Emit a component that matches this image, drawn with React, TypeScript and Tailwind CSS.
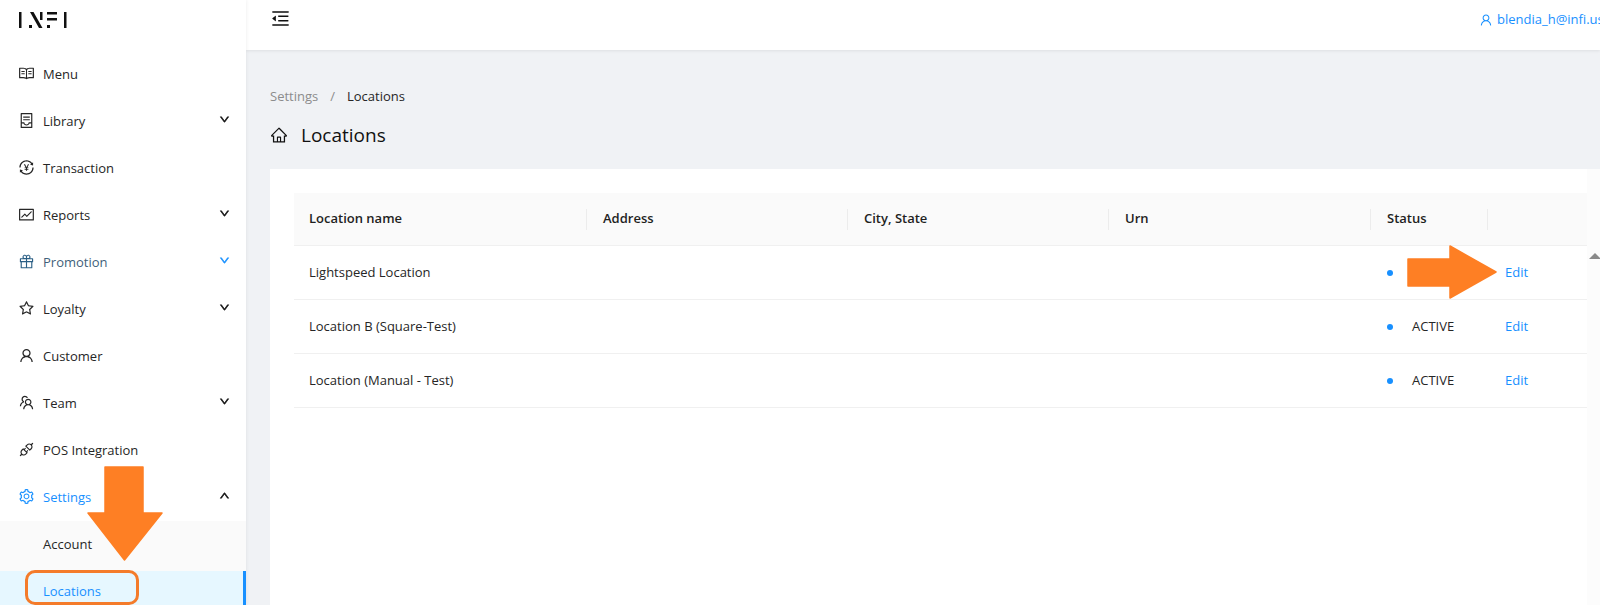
import React from "react";
import {
  AiOutlineRead,
  AiOutlineContainer,
  AiOutlineTransaction,
  AiOutlineFund,
  AiOutlineGift,
  AiOutlineStar,
  AiOutlineUser,
  AiOutlineTeam,
  AiOutlineApi,
  AiOutlineSetting,
  AiOutlineHome,
  AiOutlineMenuFold,
  AiOutlineDown,
  AiOutlineUp,
} from "react-icons/ai";

const items = [
  { label: "Menu", Icon: AiOutlineRead },
  { label: "Library", Icon: AiOutlineContainer, chev: true },
  { label: "Transaction", Icon: AiOutlineTransaction },
  { label: "Reports", Icon: AiOutlineFund, chev: true },
  { label: "Promotion", Icon: AiOutlineGift, chev: true, hover: true },
  { label: "Loyalty", Icon: AiOutlineStar, chev: true },
  { label: "Customer", Icon: AiOutlineUser },
  { label: "Team", Icon: AiOutlineTeam, chev: true },
  { label: "POS Integration", Icon: AiOutlineApi },
];

const rows = ["Lightspeed Location", "Location B (Square-Test)", "Location (Manual - Test)"];

function Logo() {
  return (
    <svg width="48" height="16" viewBox="0 0 48 16" className="block">
      <rect x="0" y="0" width="2.500" height="16" fill="#111" />
      <rect x="10" y="13" width="3" height="3" fill="#111" />
      <path d="M11 0h3.500l9 16h-3.500z" fill="#111" />
      <rect x="21" y="0" width="2.500" height="8" fill="#111" />
      <rect x="28" y="0" width="10" height="2.500" fill="#111" />
      <rect x="28" y="6" width="10" height="2.500" fill="#111" />
      <rect x="28" y="13" width="3" height="3" fill="#111" />
      <rect x="45" y="0" width="2.500" height="16" fill="#111" />
    </svg>
  );
}

export default function App() {
  return (
    <div className="relative flex h-[605px] w-[1600px] overflow-hidden bg-[#f0f2f5] font-['Open_Sans','Noto_Sans',sans-serif] text-[13px] text-[#262626]">
      <aside className="z-10 flex w-[246px] shrink-0 flex-col bg-white shadow-[1px_0_3px_rgba(0,0,0,0.05)]">
        <div className="flex h-[51px] items-start pl-[19px] pt-[12px]">
          <Logo />
        </div>
        {items.map(({ label, Icon, chev, hover }) => (
          <div key={label} className="flex h-[47px] items-center pl-[18px] pr-[16px]">
            <Icon className={`-mt-[2px] h-[17px] w-[17px] shrink-0 ${hover ? "text-[#2b5f85]" : "text-[#262626]"}`} />
            <span className={`ml-[8px] flex-1 ${hover ? "text-[#3f5f7a]" : ""}`}>{label}</span>
            {chev && <AiOutlineDown className={`-mt-[4px] h-[11px] w-[11px] stroke-[70] ${hover ? "text-[#1890ff]" : "text-[#111]"}`} />}
          </div>
        ))}
        <div className="flex h-[47px] items-center pl-[18px] pr-[16px] text-[#1890ff]">
          <AiOutlineSetting className="-mt-[2px] h-[17px] w-[17px] shrink-0" />
          <span className="ml-[8px] flex-1">Settings</span>
          <AiOutlineUp className="-mt-[4px] h-[11px] w-[11px] stroke-[70] text-[#111]" />
        </div>
        <div className="flex flex-1 flex-col overflow-hidden bg-[#fafafa]">
          <div className="flex h-[50px] shrink-0 items-center pb-[3px] pl-[43px]">Account</div>
          <div className="flex h-[40px] shrink-0 items-center border-r-[3px] border-[#1890ff] bg-[#e6f7ff] pl-[43px] pt-[1px] text-[#1890ff]">
            Locations
          </div>
        </div>
      </aside>

      <main className="flex min-w-0 flex-1 flex-col">
        <header className="flex h-[50px] shrink-0 items-start justify-between bg-white pl-[24px] pt-[8px] shadow-[0_1px_3px_rgba(0,0,0,0.08)]">
          <AiOutlineMenuFold className="h-[21px] w-[21px] text-[#111]" />
          <div className="mt-[2px] flex w-[121px] shrink-0 items-center gap-[4px] overflow-hidden whitespace-nowrap text-[#1890ff]">
            <AiOutlineUser className="h-[14px] w-[14px] shrink-0" />
            <span>blendia_h@infi.us</span>
          </div>
        </header>

        <div className="flex flex-1 flex-col pl-[24px] pt-[37px]">
          <div className="flex h-[20px] items-center text-[#8c8c8c]">
            <span>Settings</span>
            <span className="mx-[12px]">/</span>
            <span className="text-[#262626]">Locations</span>
          </div>
          <div className="mt-[10px] flex h-[36px] items-center">
            <AiOutlineHome className="h-[18px] w-[18px] text-[#111]" />
            <h1 className="ml-[13px] text-[19px] font-normal text-[#111]">Locations</h1>
          </div>
          <div className="mt-[16px] flex flex-1 bg-white pl-[24px]">
            <div className="w-[1293px] shrink-0 pt-[24px]">
              <div className="grid h-[53px] grid-cols-[293px_261px_261px_262px_117px_99px] items-center border-b border-[#f0f0f0] bg-[#fafafa] font-semibold text-[#1f1f1f]">
                {["Location name", "Address", "City, State", "Urn", "Status", ""].map((h, i) => (
                  <div
                    key={i}
                    className={`flex h-[21px] items-center ${i === 0 ? "pl-[15px]" : "pl-[16px]"} ${i < 5 ? "border-r border-[#ececec]" : ""}`}
                  >
                    {h}
                  </div>
                ))}
              </div>
              {rows.map((name) => (
                <div
                  key={name}
                  className="grid h-[54px] grid-cols-[293px_261px_261px_262px_117px_99px] items-center border-b border-[#f0f0f0]"
                >
                  <div className="pl-[15px]">{name}</div>
                  <div />
                  <div />
                  <div />
                  <div className="flex items-center pl-[16px]">
                    <span className="h-[6px] w-[6px] rounded-full bg-[#1890ff]" />
                    <span className="ml-[19px]">ACTIVE</span>
                  </div>
                  <div className="pl-[17px] text-[#1890ff]">Edit</div>
                </div>
              ))}
            </div>
            <div className="flex-1 bg-[#fcfcfc] pt-[84px]">
              <div className="ml-[2px] h-0 w-0 border-x-[6px] border-b-[6px] border-x-transparent border-b-[#8a8a8a]" />
            </div>
          </div>
        </div>
      </main>

      <svg className="pointer-events-none absolute left-[87px] top-[466px] z-20" width="76" height="96" viewBox="0 0 76 96">
        <path d="M18 1h38v46h19L37.500 94 1 47h17z" fill="#fe7f24" stroke="#fe7f24" strokeWidth="1.500" strokeLinejoin="round" />
      </svg>
      <div className="pointer-events-none absolute left-[25px] top-[570px] z-20 h-[35px] w-[114px] rounded-[10px] border-[3px] border-[#f47b2a]" />
      <svg className="pointer-events-none absolute left-[1407px] top-[245px] z-20" width="91" height="54" viewBox="0 0 91 54">
        <path d="M1 14h42V1l46 26-46 26V41H1z" fill="#fe7f24" stroke="#fe7f24" strokeWidth="1.500" strokeLinejoin="round" />
      </svg>
    </div>
  );
}
